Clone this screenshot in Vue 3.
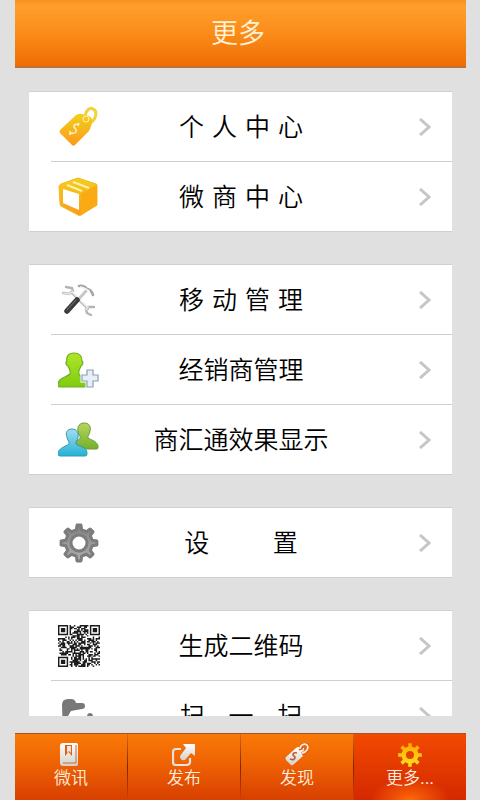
<script setup>
import { ref } from 'vue'

const groups = [
  [
    { icon: 'tag', label: '个 人 中 心' },
    { icon: 'box', label: '微 商 中 心' }
  ],
  [
    { icon: 'tools', label: '移 动 管 理' },
    { icon: 'user', label: '经销商管理' },
    { icon: 'users', label: '商汇通效果显示' }
  ],
  [{ icon: 'gear', label: '设        置' }],
  [
    { icon: 'qr', label: '生成二维码' },
    { icon: 'scan', label: '扫   一   扫' }
  ]
]

const tabs = [
  { id: 'news', label: '微讯' },
  { id: 'publish', label: '发布' },
  { id: 'discover', label: '发现' },
  { id: 'more', label: '更多...' }
]
const active = ref('more')

// Decorative QR pattern: three finder squares and pseudo-random modules
function buildQr(n) {
  let seed = 77
  let d = ''
  const finder = (x, y) => {
    const edge = Math.max(Math.abs(x - 3), Math.abs(y - 3))
    return edge === 3 || edge <= 1
  }
  for (let y = 0; y < n; y++) {
    for (let x = 0; x < n; x++) {
      seed = (seed * 1103515245 + 12345) % 2147483648
      let on = seed / 2147483648 < 0.54
      if (x < 8 && y < 8) on = x < 7 && y < 7 && finder(x, y)
      else if (x > n - 9 && y < 8) on = x > n - 8 && y < 7 && finder(x - n + 7, y)
      else if (x < 8 && y > n - 9) on = x < 7 && y > n - 8 && finder(x, y - n + 7)
      if (on) d += `M${x} ${y}h1v1h-1z`
    }
  }
  return d
}
const qrPath = buildQr(29)

// Gear outline with flat-topped teeth around centre (c, c)
function buildGear(c, outer, root, hole, tip, base) {
  const pts = []
  for (let i = 0; i < 8; i++) {
    const a = (i * Math.PI) / 4
    for (const [r, o] of [[root, -base], [outer, -tip], [outer, tip], [root, base]]) {
      pts.push(`${(c + r * Math.sin(a + o)).toFixed(2)} ${(c - r * Math.cos(a + o)).toFixed(2)}`)
    }
  }
  return `M${pts.join('L')}ZM${c - hole} ${c}a${hole} ${hole} 0 1 0 ${hole * 2} 0a${hole} ${hole} 0 1 0 ${-hole * 2} 0Z`
}
const gearPath = buildGear(21, 18, 13.5, 8, 0.11, 0.2)
const smallGear = buildGear(12, 12, 8.6, 4, 0.15, 0.2)
</script>

<template>
  <div class="page">
    <svg class="defs" aria-hidden="true">
      <defs>
        <linearGradient id="gold" x1="0" y1="0" x2="0" y2="1">
          <stop offset="0" stop-color="#f3cf1c" /><stop offset="1" stop-color="#fb9b1c" />
        </linearGradient>
        <linearGradient id="lime" x1="0" y1="0" x2="0" y2="1">
          <stop offset="0" stop-color="#b0e626" /><stop offset="1" stop-color="#7fcb12" />
        </linearGradient>
        <linearGradient id="leaf" x1="0" y1="0" x2="0" y2="1">
          <stop offset="0" stop-color="#b5d65c" /><stop offset="1" stop-color="#75b02c" />
        </linearGradient>
        <linearGradient id="sky" x1="0" y1="0" x2="0" y2="1">
          <stop offset="0" stop-color="#a5dcee" /><stop offset="1" stop-color="#22b2d6" />
        </linearGradient>
        <linearGradient id="steel" x1="0" y1="0" x2="0" y2="1">
          <stop offset="0" stop-color="#808080" /><stop offset="1" stop-color="#b0b0b0" />
        </linearGradient>
        <linearGradient id="silver" x1="0" y1="0" x2="0" y2="1">
          <stop offset="0" stop-color="#fff" /><stop offset="1" stop-color="#d3d0cc" />
        </linearGradient>
        <linearGradient id="sun" x1="0" y1="0" x2="0" y2="1">
          <stop offset="0" stop-color="#ffa800" /><stop offset="1" stop-color="#ffe51c" />
        </linearGradient>
      </defs>
    </svg>

    <header class="header"><h1>更多</h1></header>

    <main class="content">
      <ul v-for="(group, g) in groups" :key="g" class="card">
        <li v-for="item in group" :key="item.icon">
          <a href="#" class="row" @click.prevent>
            <svg class="icon" viewBox="0 0 42 42" aria-hidden="true">
              <g v-if="item.icon === 'tag'">
                <path d="M27 10C28 4 32 1 35 3C40 5 38 14 32 17" fill="none" stroke="#f0d23a" stroke-width="3" stroke-linecap="round" />
                <path d="M2 24L17 10Q20 7 24 8L31 10Q35 12 34 17L32 23Q31 25 30 26L17 39Q15 41 13 38L2 27Q1 26 2 24Z" fill="url(#gold)" />
                <circle cx="28" cy="13" r="3" fill="none" stroke="#fff3b8" stroke-width="1" />
                <path d="M21 18Q15 18 16 21Q19 24 18 26Q17 28 12 27M21 17L20 20M12 25V29" fill="none" stroke="#fff2cf" stroke-width="1.5" />
              </g>
              <g v-else-if="item.icon === 'box'">
                <path d="M20 2L38 8Q39 8 39 10V29L23 39Q22 40 20 39L3 30Q2 29 2 27L1 11Q1 9 3 8Z" fill="url(#gold)" stroke="#f5b51f" stroke-width="1" />
                <path d="M23 18L39 9V29L23 39Z" fill="#faaa13" />
                <path d="M5 13L21 18V34L5 27Z" fill="#fff" />
                <path d="M9 9L24 15M15 6L31 12" stroke="#fff1ac" stroke-width="2" />
              </g>
              <g v-else-if="item.icon === 'tools'" fill="none" stroke-linecap="round">
                <path d="M5 14L11 15L15 12L14 9L8 8M13 13L30 30M36 28L30 28L28 31L29 34L33 36" stroke="#b4b4b4" stroke-width="2.4" />
                <path d="M5 14L11 15L15 12M14 13L30 29M30 28L28 31" stroke="#eee" stroke-width="1.2" />
                <path d="M20 21L28 12" stroke="#c8c8c8" stroke-width="3" />
                <path d="M21 7Q26 6 29 10Q33 10 35 16" stroke="#a5a5a5" stroke-width="2.6" />
                <path d="M23 8Q27 9 31 12" stroke="#f2f2f2" stroke-width="1.8" />
                <path d="M9 32L19 21" stroke="#3b3b3b" stroke-width="5.5" />
                <path d="M9 31L18 21" stroke="#777" stroke-width="1" />
              </g>
              <g v-else-if="item.icon === 'user'">
                <path d="M16 4C22 4 24 8 24 12C26 13 24 17 23 17C22 20 20 21 21 25C22 28 28 29 28 34V37Q28 38 26 38H2Q0 38 0 36C0 29 7 29 12 25C13 21 11 20 10 17C8 16 7 13 9 12C8 8 10 4 16 4Z" fill="url(#lime)" stroke="#6fae20" stroke-width="1.2" />
                <path d="M29 21H35V26H40V32H35V38H29V32H24V26H29Z" fill="#e8eff8" stroke="#fff" stroke-width="3" />
                <path d="M29 21H35V26H40V32H35V38H29V32H24V26H29Z" fill="#e8eff8" stroke="#8e9fb3" stroke-width="1.2" />
              </g>
              <g v-else-if="item.icon === 'users'">
                <path d="M26 4C31 4 33 7 32 12C32 15 29 17 30 19C33 21 39 22 40 27V29Q40 30 38 30H16V24C20 21 23 20 22 17C19 14 18 4 26 4Z" fill="url(#leaf)" stroke="#6c9c39" />
                <path d="M14 10C19 10 21 14 20 18C20 21 17 23 18 25C22 28 29 28 29 34V35Q29 37 27 37H2Q0 37 0 35C0 29 7 28 11 25C12 23 9 21 9 18C7 14 9 10 14 10Z" fill="url(#sky)" stroke="#3697b2" />
              </g>
              <path v-else-if="item.icon === 'gear'" :d="gearPath" fill="url(#steel)" stroke="#7c7c7c" stroke-width="3" stroke-linejoin="round" fill-rule="evenodd" />
              <svg v-else-if="item.icon === 'qr'" width="42" height="42" viewBox="0 0 29 29">
                <path :d="qrPath" fill="#1c1c1c" />
              </svg>
              <g v-else fill="#787878">
                <path d="M10 4H13Q17 4 18 8H24Q27 8 27 11Q27 14 24 14L13 16L10 21V40H5L4 10Q4 4 10 4Z" />
                <path d="M29 22Q29 18 32 18Q35 18 35 22L31 34H27Z" />
              </g>
            </svg>
            <span class="label">{{ item.label }}</span>
            <svg class="chevron" viewBox="0 0 12 18" aria-hidden="true">
              <path d="M1 1L10 9L1 17" fill="none" stroke="#c6c6c6" stroke-width="3" />
            </svg>
          </a>
        </li>
      </ul>
    </main>

    <nav class="tabs">
      <a v-for="tab in tabs" :key="tab.id" href="#" class="tab" :class="{ active: tab.id === active }" @click.prevent="active = tab.id">
        <svg class="tab-icon" viewBox="0 0 24 24" aria-hidden="true">
          <g v-if="tab.id === 'news'">
            <path d="M4 0H17Q19 0 19 2V21Q19 23 17 23H4Q1 23 1 20V3Q1 0 4 0Z" fill="url(#silver)" />
            <path d="M17 2V20H4" fill="none" stroke="#c96b32" stroke-width="1" />
            <path d="M6 2H13V13L9.500 9L6 13Z" fill="#d9631c" />
            <path d="M8 3H12V10L10 8L8 10Z" fill="#f5e2d2" />
          </g>
          <g v-else-if="tab.id === 'publish'">
            <path d="M9 6H4Q1 6 1 9V19Q1 22 4 22H14Q18 22 18 19V15" fill="none" stroke="#e5e1dc" stroke-width="2.2" />
            <path d="M11 1H23V13L19 10L13 17Q8 18 8 13L14 5Z" fill="url(#silver)" />
          </g>
          <g v-else-if="tab.id === 'discover'">
            <path d="M1 14L11 5Q12 4 14 4L19 5L18 13L8 22Q6 23 5 21L1 17Q0 15 1 14Z" fill="url(#silver)" />
            <path d="M16 7C15 2 19 0 22 2C24 5 22 9 17 11" fill="none" stroke="#e45a05" stroke-width="4" />
            <path d="M15 6C15 2 19 0 22 2C24 5 22 9 17 10" fill="none" stroke="#f0ece6" stroke-width="1.8" />
            <path d="M12 10Q8 9 8 12L10 14Q10 18 5 16" fill="none" stroke="#bd5b31" stroke-width="1.7" />
          </g>
          <path v-else :d="smallGear" fill="url(#sun)" fill-rule="evenodd" />
        </svg>
        <span>{{ tab.label }}</span>
      </a>
    </nav>
  </div>
</template>

<style>
body {
  background: #e0e0e0;
}
</style>

<style scoped>
.page {
  display: flex;
  flex-direction: column;
  box-sizing: border-box;
  height: 100vh;
  padding: 0 14px 0 15px;
  background: #e0e0e0;
  font-family: "DejaVu Sans", "Noto Sans CJK SC", sans-serif;
}
.defs {
  position: absolute;
  width: 0;
  height: 0;
}
.header {
  flex: none;
  box-sizing: border-box;
  height: 68px;
  padding: 2px 5px 0 0;
  border-bottom: 2px solid #bd7132;
  background: linear-gradient(#f6921f 0, #ff9f2b 6px, #fb8c1a 50%, #ee6d02 100%);
}
.header h1 {
  margin: 0;
  text-align: center;
  color: #fff3d6;
  font-size: 27px;
  font-weight: 350;
  line-height: 64px;
}
.content {
  flex: 1;
  min-height: 0;
  display: flex;
  flex-direction: column;
  gap: 32px;
  overflow: hidden;
  margin: 23px 14px 17px;
}
.card {
  flex: none;
  margin: 0;
  padding: 0;
  list-style: none;
  border-top: 1px solid #d0d0d0;
  background: #fff;
}
.row {
  display: flex;
  align-items: center;
  box-sizing: border-box;
  height: 70px;
  padding: 0 21px 0 29px;
  color: #000;
  text-decoration: none;
  border-bottom: 1px solid #cfcfcf;
}
.card li:not(:last-child) .row {
  margin-left: 22px;
  padding-left: 7px;
}
.icon {
  flex: none;
  width: 42px;
  height: 42px;
}
.label {
  flex: 1;
  padding: 2px 37px 0 0;
  text-align: center;
  white-space: pre;
  font-size: 25px;
  font-weight: 350;
  line-height: 36px;
}
.chevron {
  flex: none;
  width: 12px;
  height: 18px;
}
.tabs {
  flex: none;
  display: flex;
  box-sizing: border-box;
  height: 67px;
  border-top: 1px solid #a3542a;
  background: linear-gradient(#f97a07, #ee6204 45%, #d83f00);
}
.tab {
  flex: 1;
  display: flex;
  flex-direction: column;
  align-items: center;
  gap: 1px;
  padding-top: 9px;
  color: #fdeede;
  text-decoration: none;
  font-family: "Liberation Sans", "Noto Sans CJK SC", sans-serif;
  font-size: 17px;
  font-weight: 350;
  line-height: 22px;
}
.tab:not(:last-child) {
  border-right: 1px solid;
  border-image: linear-gradient(#e06a10, #7a2600 50%, #d83f00) 1;
}
.tab.active {
  background:
    radial-gradient(ellipse 40px 22px at 50% 100%, #ff6a0a, transparent),
    linear-gradient(#f24a02, #d42800);
}
.tab-icon {
  width: 24px;
  height: 24px;
}
</style>
